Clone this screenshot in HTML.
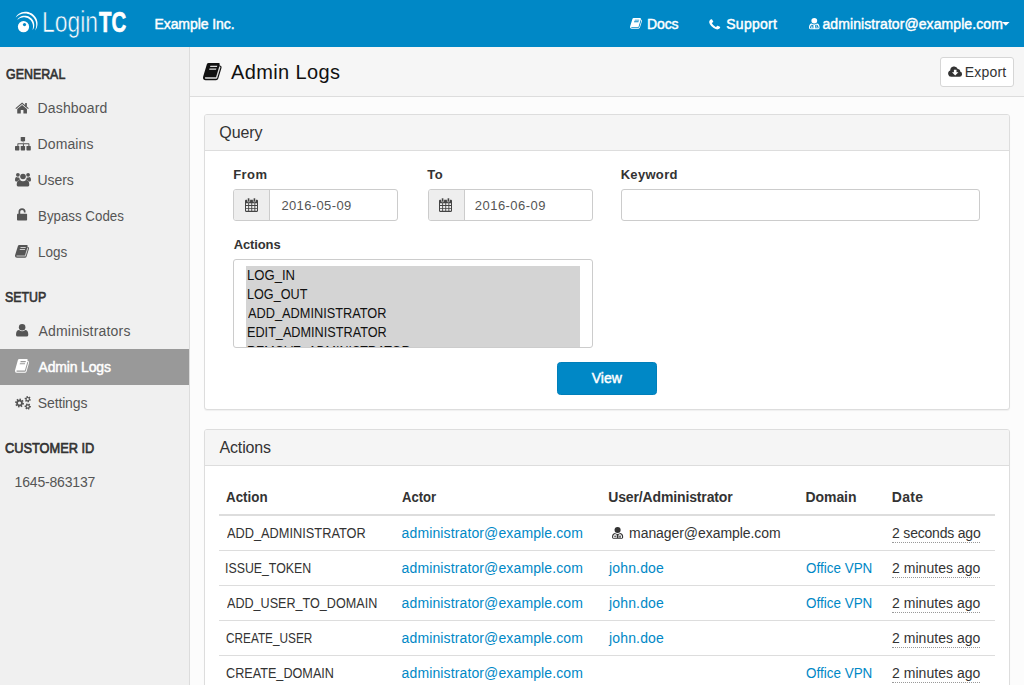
<!DOCTYPE html>
<html lang="en"><head><meta charset="utf-8"><title>Admin Logs - LoginTC</title>
<style>
*{box-sizing:border-box}
html,body{margin:0;padding:0}
body{width:1024px;height:685px;overflow:hidden;background:#fcfcfc;font-family:"Liberation Sans",sans-serif;font-size:14px;color:#333;position:relative}
.t{position:absolute;white-space:pre;display:block;text-decoration:none}
.ic{position:absolute;display:block;overflow:visible}
.bx{position:absolute}
#nav{left:0;top:0;width:1024px;height:47.2px;background:#0088c6}
#side{left:0;top:47px;width:190px;height:638px;background:#f0f0f0;border-right:1px solid #dcdcdc}
#act{left:0;top:349px;width:189px;height:36px;background:#999}
#ph{left:190px;top:47px;width:834px;height:50px;background:#f6f6f6;border-bottom:1px solid #ddd}
#exp{left:940px;top:57px;width:74px;height:30px;background:#fff;border:1px solid #d6d6d6;border-radius:3px}
.panel{left:204px;width:806px;background:#fff;border:1px solid #ddd;border-radius:3px;overflow:hidden;box-shadow:0 1px 1px rgba(0,0,0,.05)}
.panel .hd{position:absolute;left:0;top:0;width:100%;height:36px;background:#f5f5f5;border-bottom:1px solid #ddd}
.inp{background:#fff;border:1px solid #ccc;border-radius:3px;overflow:hidden}
.addon{position:absolute;left:0;top:0;width:36px;height:100%;background:#eee;border-right:1px solid #ccc}
#sel{left:233px;top:259px;width:359.5px;height:88.600px;background:#fff;border:1px solid #ccc;border-radius:3px;overflow:hidden}
#selbg{position:absolute;left:11.600px;top:6.200px;width:334.600px;height:90px;background:#d4d4d4}
#view{left:556.800px;top:362.200px;width:100.200px;height:32.400px;background:#0088c6;border:1px solid #007fba;border-radius:3.500px}
#lg1{left:42.4px;top:7.4px;font-size:30px;line-height:30px;color:#fff;transform-origin:0 0;transform:scaleX(0.763);-webkit-text-stroke:0.62px #0088c6}
#lg2{left:98.5px;top:7.3px;font-size:30px;line-height:30px;font-weight:bold;color:#fff;transform-origin:0 0;transform:scaleX(0.68);-webkit-text-stroke:0.7px #fff}
.hl{position:absolute;left:219px;width:776px;height:1px;background:#ddd}
</style></head><body>
<header>
<div class="bx" id="nav"></div>
<svg class="ic" style="left:0;top:0" width="60" height="47" viewBox="0 0 60 47" fill="#fff"><circle cx="23.5" cy="26.7" r="5.6"/><circle cx="24.5" cy="24.6" r="1.6" fill="#0088c6"/><path d="M17.25 19.84 L17.86 18.78 L18.72 17.89 L19.70 17.13 L20.80 16.52 L21.98 16.07 L23.23 15.78 L24.50 15.66 L25.79 15.72 L27.06 15.95 L28.29 16.35 L29.46 16.92 L30.54 17.63 L31.51 18.49 L32.36 19.47 L33.06 20.56 L33.61 21.72 L33.99 22.94 L34.20 24.20 L34.24 25.47 L34.10 26.72 L33.79 27.92 L33.29 29.05 L32.55 30.02 L32.55 30.02 L32.76 28.85 L32.94 27.72 L33.01 26.61 L32.96 25.50 L32.78 24.42 L32.48 23.38 L32.07 22.39 L31.54 21.46 L30.91 20.60 L30.19 19.83 L29.39 19.14 L28.51 18.56 L27.57 18.08 L26.57 17.71 L25.54 17.47 L24.48 17.34 L23.40 17.34 L22.33 17.47 L21.26 17.72 L20.23 18.09 L19.22 18.59 L18.25 19.20 L17.25 19.84Z"/><path d="M15.73 17.39 L16.52 16.01 L17.61 14.82 L18.87 13.81 L20.28 12.98 L21.80 12.36 L23.40 11.95 L25.05 11.78 L26.72 11.83 L28.37 12.12 L29.96 12.63 L31.47 13.36 L32.87 14.29 L34.12 15.41 L35.20 16.69 L36.09 18.10 L36.78 19.62 L37.24 21.22 L37.48 22.85 L37.48 24.50 L37.26 26.11 L36.80 27.67 L36.12 29.12 L35.14 30.39 L35.14 30.39 L35.59 28.89 L35.97 27.43 L36.18 25.95 L36.20 24.48 L36.05 23.02 L35.72 21.61 L35.22 20.25 L34.55 18.98 L33.74 17.80 L32.79 16.73 L31.71 15.80 L30.52 15.00 L29.25 14.37 L27.90 13.89 L26.50 13.59 L25.07 13.46 L23.62 13.51 L22.19 13.75 L20.79 14.16 L19.43 14.75 L18.14 15.50 L16.93 16.41 L15.73 17.39Z"/></svg>
<span class="t" id="lg1">Login</span><span class="t" id="lg2">TC</span>
<svg class="ic" style="left:629.5px;top:18.4px" width="12.1" height="10.7" viewBox="0 0 28 26" preserveAspectRatio="none" fill="#fff"><path d="M8.600 0 H23.400 Q25.800 0 25.100 2.200 L24.700 3.500 Q28.800 4.400 27.800 7.600 L23 23.400 Q22.300 26 19.600 26 H4 Q0 26 0 22.400 Q0 21.400 0.400 20.200 L5.800 2 Q6.400 0 8.600 0 Z"/><path fill="#0088c6" d="M3.200 21.700 H19.600 L24.600 5 L26 5.600 Q26.300 6.200 26.100 7 L21.400 22.600 Q21 23.800 19.800 23.800 H3.600 Q2.200 23 3.200 21.700Z M11.200 4 h10.400 l-0.600 1.900 h-10.400z M9.800 8.200 h10.400 l-0.600 1.900 h-10.400z"/></svg>
<svg class="ic" style="left:709.4px;top:18.6px" width="10.9" height="10.0" viewBox="0 0 22 22" preserveAspectRatio="none" fill="#fff"><path d="M4.400 0.600 q1.100 -0.700 1.800 0.400 l2.300 4.300 q0.500 1 -0.400 1.700 l-2 1.400 q-0.600 0.400 -0.300 1.100 q2.700 5.400 7.700 8.200 q0.600 0.300 1 -0.300 l1.500 -2 q0.700 -0.900 1.700 -0.400 l4.300 2.300 q1.100 0.700 0.400 1.800 q-1.200 2.800 -4.400 3.700 q-3.600 0.600 -8.600 -2.900 q-5 -3.700 -7.600 -8.600 q-2.100 -4 -1.200 -6.600 q0.900 -2.600 3.800 -4.100z"/></svg>
<svg class="ic" style="left:808.8px;top:18.1px" width="10.6" height="11.2" viewBox="0 0 22 24" preserveAspectRatio="none" fill="#fff"><circle cx="11" cy="6" r="6"/><path fill-rule="evenodd" d="M2.600 24 q-2.600 0 -2.600 -3 q0 -8.400 5.600 -9 q2.600 2 5.400 2 q2.800 0 5.400 -2 q5.600 0.600 5.600 9 q0 3 -2.600 3z M3.400 16.400 q-1.200 2 -1.200 4.400 q0 1.400 1.200 1.400 h5.800 v-6.600 q-1.600 -0.400 -2.800 -1.200 q-2 0.400 -3 2z M18.600 16.400 q1.200 2 1.200 4.400 q0 1.400 -1.200 1.400 h-5.800 v-6.600 q1.600 -0.400 2.800 -1.200 q2 0.400 3 2z"/><circle cx="6" cy="20" r="1.600"/><path d="M14 22.200 v-2.400 q0 -1.800 1.800 -1.800 q1.800 0 1.800 1.800 v2.400 h-1.100 v-2.400 q0 -0.700 -0.700 -0.700 q-0.700 0 -0.700 0.700 v2.400z"/><rect x="5.500" y="15.500" width="1" height="3.500"/><rect x="15.300" y="15.500" width="1" height="2.500"/></svg>
<svg class="ic" style="left:1002.4px;top:21.9px" width="7.6" height="3.8" viewBox="0 0 8 4" preserveAspectRatio="none" fill="#fff"><path d="M0 0 h8 l-4 4z"/></svg>
<span class="t" style="left:154.45px;top:13.5px;font-size:14px;line-height:20px;letter-spacing:-0.074px;color:#fff;-webkit-text-stroke:0.45px currentColor;">Example Inc.</span>
<a class="t" href="#" style="left:646.95px;top:13.5px;font-size:14px;line-height:20px;letter-spacing:-0.084px;color:#fff;-webkit-text-stroke:0.45px currentColor;">Docs</a>
<a class="t" href="#" style="left:726.26px;top:13.5px;font-size:14px;line-height:20px;letter-spacing:0.265px;color:#fff;-webkit-text-stroke:0.45px currentColor;">Support</a>
<span class="t" style="left:822.51px;top:13.5px;font-size:14px;line-height:20px;letter-spacing:0.08px;color:#fff;-webkit-text-stroke:0.45px currentColor;">administrator@example.com</span>
</header>
<aside>
<div class="bx" id="side"></div>
<div class="bx" id="act"></div>
<svg class="ic" style="left:15.1px;top:101.6px" width="14.2" height="11.4" viewBox="0 0 28 22" preserveAspectRatio="none" fill="#555"><path d="M14 1.2 L27.2 12 L25.8 13.6 L14 4 L2.2 13.6 L0.8 12 Z"/><path d="M14 5.6 L23.6 13.4 V22 H16.6 V15.4 H11.4 V22 H4.4 V13.4 Z"/><rect x="20" y="2" width="3.4" height="7"/></svg>
<svg class="ic" style="left:14.8px;top:136.9px" width="15.8" height="13.4" viewBox="0 0 32 27" preserveAspectRatio="none" fill="#555"><rect x="11.6" y="0" width="8.8" height="8.6" rx="1.2"/><rect x="0" y="18" width="8.8" height="9" rx="1.2"/><rect x="11.6" y="18" width="8.8" height="9" rx="1.2"/><rect x="23.2" y="18" width="8.8" height="9" rx="1.2"/><path d="M15 8 h2 v4.4 h11.2 q1 0 1 1 v5 h-2 v-4 h-9.2 v4 h-2 v-4 h-9.2 v4 h-2 v-5 q0 -1 1 -1 h11.2z"/></svg>
<svg class="ic" style="left:15.2px;top:172.0px" width="16.0" height="14.4" viewBox="0 0 32 29" preserveAspectRatio="none" fill="#555"><circle cx="16" cy="9" r="5.6"/><path d="M6 29 q-2.6 0 -2.6 -3 q0 -10 6.6 -10 q2.6 2.4 6 2.4 q3.400 0 6 -2.4 q6.600 0 6.600 10 q0 3 -2.600 3z"/><circle cx="5.800" cy="5.600" r="3.800"/><circle cx="26.200" cy="5.600" r="3.800"/><path d="M0 16 q0 -6 3.600 -6 q2.200 1.600 4.600 1.200 q0.800 2.600 2.600 4 q-4.400 0.200 -6.400 3.800 h-2.600 q-1.800 0 -1.800 -3z"/><path d="M32 16 q0 -6 -3.600 -6 q-2.200 1.600 -4.600 1.200 q-0.800 2.600 -2.600 4 q4.400 0.200 6.400 3.800 h2.600 q1.800 0 1.800 -3z"/></svg>
<svg class="ic" style="left:17.2px;top:208.0px" width="10.1" height="12.5" viewBox="0 0 20 25" preserveAspectRatio="none" fill="#555"><rect x="0" y="11.500" width="20" height="13.500" rx="1.600"/><path d="M3 12 V7.500 a7 7 0 0 1 14 0 V9 h-3.400 V7.500 a3.600 3.600 0 0 0 -7.200 0 V12z"/></svg>
<svg class="ic" style="left:15.2px;top:245.0px" width="14.1" height="12.7" viewBox="0 0 28 26" preserveAspectRatio="none" fill="#555"><path d="M8.600 0 H23.400 Q25.800 0 25.100 2.200 L24.700 3.500 Q28.800 4.400 27.800 7.600 L23 23.400 Q22.300 26 19.600 26 H4 Q0 26 0 22.400 Q0 21.400 0.400 20.200 L5.800 2 Q6.400 0 8.600 0 Z"/><path fill="#ccc" d="M3.200 21.700 H19.600 L24.600 5 L26 5.600 Q26.300 6.200 26.100 7 L21.400 22.600 Q21 23.800 19.800 23.800 H3.600 Q2.200 23 3.200 21.700Z M11.200 4 h10.400 l-0.600 1.900 h-10.400z M9.800 8.200 h10.400 l-0.600 1.900 h-10.400z"/></svg>
<svg class="ic" style="left:16.0px;top:324.0px" width="12.3" height="12.6" viewBox="0 0 24 25" preserveAspectRatio="none" fill="#555"><circle cx="12" cy="6.600" r="6.400"/><path d="M3.600 25 q-3.600 0 -3.600 -3.400 q0 -9.600 6 -9.600 q2.800 2.400 6 2.400 q3.200 0 6 -2.400 q6 0 6 9.600 q0 3.400 -3.600 3.400z"/></svg>
<svg class="ic" style="left:15.2px;top:359.0px" width="14.1" height="13.8" viewBox="0 0 28 26" preserveAspectRatio="none" fill="#fff"><path d="M8.600 0 H23.400 Q25.800 0 25.100 2.200 L24.700 3.500 Q28.800 4.400 27.800 7.600 L23 23.400 Q22.300 26 19.600 26 H4 Q0 26 0 22.400 Q0 21.400 0.400 20.200 L5.800 2 Q6.400 0 8.600 0 Z"/><path fill="#999" d="M3.200 21.700 H19.600 L24.600 5 L26 5.600 Q26.300 6.200 26.100 7 L21.400 22.600 Q21 23.800 19.800 23.800 H3.600 Q2.200 23 3.200 21.700Z M11.200 4 h10.400 l-0.600 1.900 h-10.400z M9.800 8.200 h10.400 l-0.600 1.900 h-10.400z"/></svg>
<svg class="ic" style="left:15.2px;top:395.6px" width="16.0" height="13.7" viewBox="0 0 32 27" preserveAspectRatio="none" fill="#555"><path fill-rule="evenodd" d="M18.00 14.04 L17.38 17.08 L14.98 16.59 L13.83 18.30 L15.19 20.33 L12.61 22.04 L11.26 20.00 L9.24 20.40 L8.76 22.80 L5.72 22.18 L6.21 19.78 L4.50 18.63 L2.47 19.99 L0.76 17.41 L2.80 16.06 L2.40 14.04 L0.00 13.56 L0.62 10.52 L3.02 11.01 L4.17 9.30 L2.81 7.27 L5.39 5.56 L6.74 7.60 L8.76 7.20 L9.24 4.80 L12.28 5.42 L11.79 7.82 L13.50 8.97 L15.53 7.61 L17.24 10.19 L15.20 11.54 L15.60 13.56Z M5.90 13.80 a3.1 3.1 0 1 0 6.2 0 a3.1 3.1 0 1 0 -6.2 0Z"/><path fill-rule="evenodd" d="M31.88 6.75 L31.02 9.54 L29.18 8.89 L27.80 10.16 L28.31 12.05 L25.46 12.70 L25.09 10.78 L23.31 10.23 L21.92 11.61 L19.94 9.46 L21.42 8.19 L21.00 6.36 L19.12 5.85 L19.98 3.06 L21.82 3.71 L23.20 2.44 L22.69 0.55 L25.54 -0.10 L25.91 1.82 L27.69 2.37 L29.08 0.99 L31.06 3.14 L29.58 4.41 L30.00 6.24Z M23.30 6.30 a2.2 2.2 0 1 0 4.4 0 a2.2 2.2 0 1 0 -4.4 0Z"/><path fill-rule="evenodd" d="M31.85 19.87 L31.55 22.78 L29.62 22.51 L28.53 24.03 L29.39 25.78 L26.73 26.98 L25.99 25.17 L24.13 24.99 L23.05 26.61 L20.68 24.90 L21.87 23.36 L21.10 21.66 L19.15 21.53 L19.45 18.62 L21.38 18.89 L22.47 17.37 L21.61 15.62 L24.27 14.42 L25.01 16.23 L26.87 16.41 L27.95 14.79 L30.32 16.50 L29.13 18.04 L29.90 19.74Z M23.30 20.70 a2.2 2.2 0 1 0 4.4 0 a2.2 2.2 0 1 0 -4.4 0Z"/></svg>
<span class="t" style="left:5.63px;top:64.0px;font-size:14px;line-height:20px;letter-spacing:0px;color:#333;-webkit-text-stroke:0.65px currentColor;transform-origin:0 0;transform:scaleX(0.8859);">GENERAL</span>
<a class="t" href="#" style="left:37.55px;top:98.0px;font-size:14px;line-height:20px;letter-spacing:0.156px;color:#555;">Dashboard</a>
<a class="t" href="#" style="left:37.55px;top:134.0px;font-size:14px;line-height:20px;letter-spacing:0.117px;color:#555;">Domains</a>
<a class="t" href="#" style="left:37.62px;top:170.0px;font-size:14px;line-height:20px;letter-spacing:-0.119px;color:#555;">Users</a>
<a class="t" href="#" style="left:37.61px;top:206.0px;font-size:14px;line-height:20px;letter-spacing:0px;color:#555;transform-origin:0 0;transform:scaleX(0.9512);">Bypass Codes</a>
<a class="t" href="#" style="left:37.59px;top:242.0px;font-size:14px;line-height:20px;letter-spacing:0px;color:#555;transform-origin:0 0;transform:scaleX(0.965);">Logs</a>
<span class="t" style="left:5.34px;top:286.6px;font-size:14px;line-height:20px;letter-spacing:0px;color:#333;-webkit-text-stroke:0.65px currentColor;transform-origin:0 0;transform:scaleX(0.8827);">SETUP</span>
<a class="t" href="#" style="left:38.47px;top:320.8px;font-size:14px;line-height:20px;letter-spacing:0.19px;color:#555;">Administrators</a>
<a class="t" href="#" style="left:38.47px;top:356.7px;font-size:14px;line-height:20px;letter-spacing:-0.167px;color:#fff;-webkit-text-stroke:0.45px currentColor;">Admin Logs</a>
<a class="t" href="#" style="left:37.86px;top:392.6px;font-size:14px;line-height:20px;letter-spacing:-0.15px;color:#555;">Settings</a>
<span class="t" style="left:5.35px;top:437.7px;font-size:14px;line-height:20px;letter-spacing:0px;color:#333;-webkit-text-stroke:0.65px currentColor;transform-origin:0 0;transform:scaleX(0.9142);">CUSTOMER ID</span>
<a class="t" href="#" style="left:14.53px;top:471.5px;font-size:14px;line-height:20px;letter-spacing:-0.166px;color:#555;">1645-863137</a>
</aside>
<main>
<div class="bx" id="ph"></div>
<div class="bx" id="exp"></div>
<svg class="ic" style="left:202.7px;top:63.0px" width="18.6" height="17.2" viewBox="0 0 28 26" preserveAspectRatio="none" fill="#111"><path d="M8.600 0 H23.400 Q25.800 0 25.100 2.200 L24.700 3.500 Q28.800 4.400 27.800 7.600 L23 23.400 Q22.300 26 19.600 26 H4 Q0 26 0 22.400 Q0 21.400 0.400 20.200 L5.800 2 Q6.400 0 8.600 0 Z"/><path fill="#ddd" d="M3.200 21.700 H19.600 L24.600 5 L26 5.600 Q26.300 6.200 26.100 7 L21.400 22.600 Q21 23.800 19.800 23.800 H3.600 Q2.200 23 3.200 21.700Z M11.200 4 h10.400 l-0.600 1.900 h-10.400z M9.800 8.200 h10.400 l-0.600 1.900 h-10.400z"/></svg>
<svg class="ic" style="left:947.5px;top:66.2px" width="14.4" height="10.8" viewBox="0 0 30 22" preserveAspectRatio="none" fill="#333"><path d="M7 22 a6.600 6.600 0 0 1 -2.400 -12.800 a8.200 8.200 0 0 1 15.800 -3 a5 5 0 0 1 5 5.200 a5.400 5.400 0 0 1 -1.400 10.600z"/><path fill="#fff" d="M12.300 7.400 h5.400 v5.200 h4 l-6.700 6.800 l-6.700 -6.800 h4z"/></svg>
<span class="t" style="left:230.96px;top:61.7px;font-size:20px;line-height:20px;letter-spacing:0.393px;color:#111;">Admin Logs</span>
<span class="t" style="left:964.65px;top:62.1px;font-size:14px;line-height:20px;letter-spacing:0.216px;color:#333;">Export</span>
<section>
<div class="bx panel" style="top:114px;height:296px"><div class="hd"></div></div>
<div class="bx inp" style="left:233px;top:189px;width:165px;height:32px"><div class="addon"></div></div>
<div class="bx inp" style="left:428px;top:189px;width:165px;height:32px"><div class="addon"></div></div>
<div class="bx inp" style="left:621px;top:189px;width:359px;height:32px"></div>
<div class="bx" id="sel"><div id="selbg"></div>
<span class="t" style="left:12.67px;top:4.8px;font-size:14px;line-height:20px;letter-spacing:0px;color:#111;transform-origin:0 0;transform:scaleX(0.9364);">LOG_IN</span>
<span class="t" style="left:12.71px;top:23.7px;font-size:14px;line-height:20px;letter-spacing:0px;color:#111;transform-origin:0 0;transform:scaleX(0.9024);">LOG_OUT</span>
<span class="t" style="left:13.73px;top:42.6px;font-size:14px;line-height:20px;letter-spacing:0px;color:#111;transform-origin:0 0;transform:scaleX(0.9112);">ADD_ADMINISTRATOR</span>
<span class="t" style="left:12.71px;top:61.6px;font-size:14px;line-height:20px;letter-spacing:0px;color:#111;transform-origin:0 0;transform:scaleX(0.9053);">EDIT_ADMINISTRATOR</span>
<span class="t" style="left:12.72px;top:80.6px;font-size:14px;line-height:20px;letter-spacing:0px;color:#111;transform-origin:0 0;transform:scaleX(0.8929);">REMOVE_ADMINISTRATOR</span>
</div>
<div class="bx" id="view"></div>
<svg class="ic" style="left:245.2px;top:198.0px" width="13.0" height="13.9" viewBox="0 0 26 27" preserveAspectRatio="none" fill="#444"><path fill-rule="evenodd" d="M2 3.600 h22 q2 0 2 2 v19.400 q0 2 -2 2 h-22 q-2 0 -2 -2 v-19.400 q0 -2 2 -2z M2 10 v3.800 h4.400 v-3.800z M8.200 10 v3.800 h4.400 v-3.800z M14.400 10 v3.800 h4.400 v-3.800z M20.600 10 v3.800 h3.400 v-3.800z M2 15.400 v3.800 h4.400 v-3.800z M8.200 15.400 v3.800 h4.400 v-3.800z M14.400 15.400 v3.800 h4.400 v-3.800z M20.600 15.400 v3.800 h3.400 v-3.800z M2 20.800 v4.200 h4.400 v-4.200z M8.200 20.800 v4.200 h4.400 v-4.200z M14.400 20.800 v4.200 h4.400 v-4.200z M20.600 20.800 v4.200 h3.400 v-4.200z"/><rect x="5" y="0" width="4.400" height="7.600" rx="1.400" stroke-width="1.200" stroke="#eee"/><rect x="16.600" y="0" width="4.400" height="7.600" rx="1.400" stroke-width="1.200" stroke="#eee"/></svg>
<svg class="ic" style="left:439.2px;top:198.0px" width="13.0" height="13.9" viewBox="0 0 26 27" preserveAspectRatio="none" fill="#444"><path fill-rule="evenodd" d="M2 3.600 h22 q2 0 2 2 v19.400 q0 2 -2 2 h-22 q-2 0 -2 -2 v-19.400 q0 -2 2 -2z M2 10 v3.800 h4.400 v-3.800z M8.200 10 v3.800 h4.400 v-3.800z M14.400 10 v3.800 h4.400 v-3.800z M20.600 10 v3.800 h3.400 v-3.800z M2 15.400 v3.800 h4.400 v-3.800z M8.200 15.400 v3.800 h4.400 v-3.800z M14.400 15.400 v3.800 h4.400 v-3.800z M20.600 15.400 v3.800 h3.400 v-3.800z M2 20.800 v4.200 h4.400 v-4.200z M8.200 20.800 v4.200 h4.400 v-4.200z M14.400 20.800 v4.200 h4.400 v-4.200z M20.600 20.800 v4.200 h3.400 v-4.200z"/><rect x="5" y="0" width="4.400" height="7.600" rx="1.400" stroke-width="1.200" stroke="#eee"/><rect x="16.600" y="0" width="4.400" height="7.600" rx="1.400" stroke-width="1.200" stroke="#eee"/></svg>
<span class="t" style="left:219.24px;top:122.9px;font-size:16px;line-height:20px;letter-spacing:-0.047px;color:#333;">Query</span>
<span class="t" style="left:233.13px;top:164.6px;font-size:13px;line-height:20px;letter-spacing:0.492px;color:#333;font-weight:bold;">From</span>
<span class="t" style="left:427.15px;top:164.6px;font-size:13px;line-height:20px;letter-spacing:0.6px;color:#333;font-weight:bold;">To</span>
<span class="t" style="left:620.63px;top:164.6px;font-size:13px;line-height:20px;letter-spacing:0.32px;color:#333;font-weight:bold;">Keyword</span>
<span class="t" style="left:281.45px;top:196.1px;font-size:13px;line-height:20px;letter-spacing:0.363px;color:#555;">2016-05-09</span>
<span class="t" style="left:474.85px;top:196.1px;font-size:13px;line-height:20px;letter-spacing:0.452px;color:#555;">2016-06-09</span>
<span class="t" style="left:233.68px;top:235.2px;font-size:13px;line-height:20px;letter-spacing:-0.119px;color:#333;font-weight:bold;">Actions</span>
<span class="t" style="left:591.84px;top:368.4px;font-size:14px;line-height:20px;letter-spacing:-0.055px;color:#fff;-webkit-text-stroke:0.45px currentColor;">View</span>
</section>
<section>
<div class="bx panel" style="top:429px;height:300px"><div class="hd"></div></div>
<div class="hl" style="top:514px;height:2px"></div>
<div class="hl" style="top:550.35px"></div><div class="hl" style="top:585.35px"></div><div class="hl" style="top:620.35px"></div><div class="hl" style="top:655.35px"></div>
<svg class="ic" style="left:611.6px;top:527.4px" width="11.2" height="11.8" viewBox="0 0 22 24" preserveAspectRatio="none" fill="#333"><circle cx="11" cy="6" r="6"/><path fill-rule="evenodd" d="M2.600 24 q-2.600 0 -2.600 -3 q0 -8.400 5.600 -9 q2.600 2 5.400 2 q2.800 0 5.400 -2 q5.600 0.600 5.600 9 q0 3 -2.600 3z M3.400 16.400 q-1.200 2 -1.200 4.400 q0 1.400 1.200 1.400 h5.800 v-6.600 q-1.600 -0.400 -2.800 -1.200 q-2 0.400 -3 2z M18.600 16.400 q1.200 2 1.200 4.400 q0 1.400 -1.200 1.400 h-5.800 v-6.600 q1.600 -0.400 2.800 -1.200 q2 0.400 3 2z"/><circle cx="6" cy="20" r="1.600"/><path d="M14 22.200 v-2.400 q0 -1.800 1.800 -1.800 q1.800 0 1.800 1.800 v2.400 h-1.100 v-2.400 q0 -0.700 -0.700 -0.700 q-0.700 0 -0.700 0.700 v2.400z"/><rect x="5.500" y="15.500" width="1" height="3.500"/><rect x="15.300" y="15.500" width="1" height="2.500"/></svg>
<span class="t" style="left:219.47px;top:438.0px;font-size:16px;line-height:20px;letter-spacing:-0.143px;color:#333;">Actions</span>
<span class="t" style="left:226.07px;top:486.8px;font-size:14px;line-height:20px;letter-spacing:0px;color:#333;font-weight:bold;transform-origin:0 0;transform:scaleX(0.9541);">Action</span>
<span class="t" style="left:401.87px;top:486.8px;font-size:14px;line-height:20px;letter-spacing:0px;color:#333;font-weight:bold;transform-origin:0 0;transform:scaleX(0.9361);">Actor</span>
<span class="t" style="left:608.26px;top:486.8px;font-size:14px;line-height:20px;letter-spacing:-0.139px;color:#333;font-weight:bold;">User/Administrator</span>
<span class="t" style="left:805.56px;top:486.8px;font-size:14px;line-height:20px;letter-spacing:-0.088px;color:#333;font-weight:bold;">Domain</span>
<span class="t" style="left:891.86px;top:486.8px;font-size:14px;line-height:20px;letter-spacing:0.252px;color:#333;font-weight:bold;">Date</span>
<span class="t" style="left:226.58px;top:523.2px;font-size:14px;line-height:20px;letter-spacing:0px;color:#333;transform-origin:0 0;transform:scaleX(0.9129);">ADD_ADMINISTRATOR</span>
<a class="t" href="#" style="left:401.61px;top:523.2px;font-size:14px;line-height:20px;letter-spacing:0.122px;color:#0088c6;">administrator@example.com</a>
<span class="t" style="left:629.07px;top:523.2px;font-size:14px;line-height:20px;letter-spacing:-0.066px;color:#333;">manager@example.com</span>
<span class="t" style="left:892.10px;top:524.2px;font-size:14px;line-height:18px;letter-spacing:-0.207px;color:#333;border-bottom:1px dotted #999;">2 seconds ago</span>
<span class="t" style="left:225.46px;top:558.2px;font-size:14px;line-height:20px;letter-spacing:0px;color:#333;transform-origin:0 0;transform:scaleX(0.881);">ISSUE_TOKEN</span>
<a class="t" href="#" style="left:401.61px;top:558.2px;font-size:14px;line-height:20px;letter-spacing:0.122px;color:#0088c6;">administrator@example.com</a>
<a class="t" href="#" style="left:609.04px;top:558.2px;font-size:14px;line-height:20px;letter-spacing:0.152px;color:#0088c6;">john.doe</a>
<a class="t" href="#" style="left:805.86px;top:558.2px;font-size:14px;line-height:20px;letter-spacing:0px;color:#0088c6;transform-origin:0 0;transform:scaleX(0.9614);">Office VPN</a>
<span class="t" style="left:892.10px;top:559.2px;font-size:14px;line-height:18px;letter-spacing:0.02px;color:#333;border-bottom:1px dotted #999;">2 minutes ago</span>
<span class="t" style="left:226.58px;top:593.2px;font-size:14px;line-height:20px;letter-spacing:0px;color:#333;transform-origin:0 0;transform:scaleX(0.8996);">ADD_USER_TO_DOMAIN</span>
<a class="t" href="#" style="left:401.61px;top:593.2px;font-size:14px;line-height:20px;letter-spacing:0.122px;color:#0088c6;">administrator@example.com</a>
<a class="t" href="#" style="left:609.04px;top:593.2px;font-size:14px;line-height:20px;letter-spacing:0.152px;color:#0088c6;">john.doe</a>
<a class="t" href="#" style="left:805.86px;top:593.2px;font-size:14px;line-height:20px;letter-spacing:0px;color:#0088c6;transform-origin:0 0;transform:scaleX(0.9614);">Office VPN</a>
<span class="t" style="left:892.10px;top:594.2px;font-size:14px;line-height:18px;letter-spacing:0.02px;color:#333;border-bottom:1px dotted #999;">2 minutes ago</span>
<span class="t" style="left:226.00px;top:628.2px;font-size:14px;line-height:20px;letter-spacing:0px;color:#333;transform-origin:0 0;transform:scaleX(0.8429);">CREATE_USER</span>
<a class="t" href="#" style="left:401.61px;top:628.2px;font-size:14px;line-height:20px;letter-spacing:0.122px;color:#0088c6;">administrator@example.com</a>
<a class="t" href="#" style="left:609.04px;top:628.2px;font-size:14px;line-height:20px;letter-spacing:0.152px;color:#0088c6;">john.doe</a>
<span class="t" style="left:892.10px;top:629.2px;font-size:14px;line-height:18px;letter-spacing:0.02px;color:#333;border-bottom:1px dotted #999;">2 minutes ago</span>
<span class="t" style="left:225.96px;top:663.2px;font-size:14px;line-height:20px;letter-spacing:0px;color:#333;transform-origin:0 0;transform:scaleX(0.9032);">CREATE_DOMAIN</span>
<a class="t" href="#" style="left:401.61px;top:663.2px;font-size:14px;line-height:20px;letter-spacing:0.122px;color:#0088c6;">administrator@example.com</a>
<a class="t" href="#" style="left:805.86px;top:663.2px;font-size:14px;line-height:20px;letter-spacing:0px;color:#0088c6;transform-origin:0 0;transform:scaleX(0.9614);">Office VPN</a>
<span class="t" style="left:892.10px;top:664.2px;font-size:14px;line-height:18px;letter-spacing:0.02px;color:#333;border-bottom:1px dotted #999;">2 minutes ago</span>
</section>
</main>
</body></html>
